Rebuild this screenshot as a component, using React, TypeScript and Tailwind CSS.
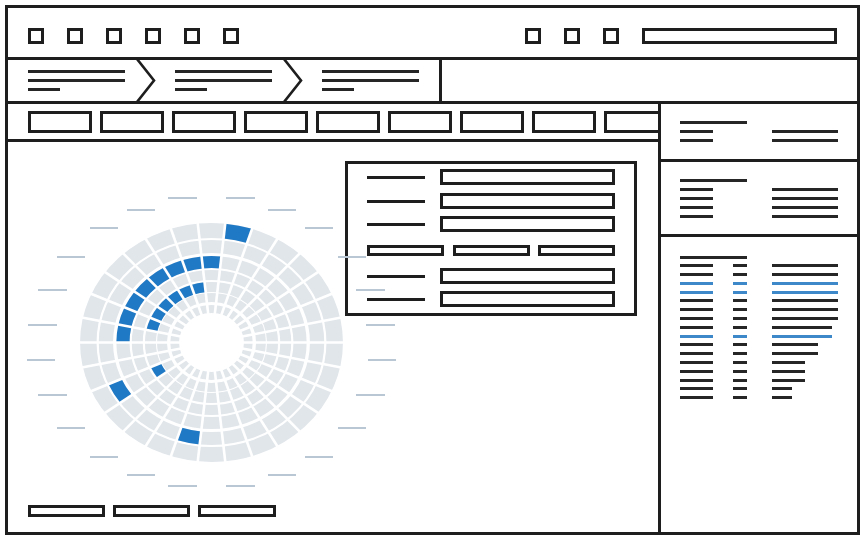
import React from "react";

// polar "heat" chart: 7 rings x 30 segments, drawn as stroked circles + white spokes
const RINGS: [number, number][] = [
  [104.5, 119.5],
  [89.5, 102.5],
  [74.5, 86.5],
  [62.5, 72.5],
  [50.5, 60.5],
  [40.5, 49.5],
  [29.5, 37.5],
];
const SEGS = 30;
const STEP = 360 / SEGS;

const BLUE: [number, number][] = [
  [0, 1],
  [2, 23], [2, 24], [2, 25], [2, 26], [2, 27], [2, 28], [2, 29], [2, 0],
  [4, 24], [4, 25], [4, 26], [4, 27], [4, 28], [4, 29],
  [4, 20],
  [1, 20],
  [1, 16],
];

const LEFT_DASHES: [number, number, number][] = [
  [168, 197, 198], [127, 155, 210], [90, 118, 228], [57, 85, 257],
  [38, 67, 290], [28, 57, 325], [27, 55, 360], [38, 67, 395],
  [57, 85, 428], [90, 118, 457], [127, 155, 475], [168, 197, 486],
];

const rad = (d: number) => (d * Math.PI) / 180;
const pt = (r: number, d: number) => [r * Math.sin(rad(d)), -r * Math.cos(rad(d))];

function arc(r: number, a0: number, a1: number) {
  const [x0, y0] = pt(r, a0);
  const [x1, y1] = pt(r, a1);
  return `M ${x0} ${y0} A ${r} ${r} 0 0 1 ${x1} ${y1}`;
}

function PolarChart() {
  return (
    <svg className="pointer-events-none absolute left-0 top-0 z-10 h-[390px] w-[650px] overflow-visible" viewBox="0 0 650 390">
      <g transform="translate(-8,-142)">
        {LEFT_DASHES.flatMap(([x1, x2, y], i) => [
          <line key={`l${i}`} x1={x1} x2={x2} y1={y} y2={y} stroke="#b9c7d4" strokeWidth={2} />,
          <line key={`r${i}`} x1={423 - x2} x2={423 - x1} y1={y} y2={y} stroke="#b9c7d4" strokeWidth={2} />,
        ])}
        <g transform="translate(211.5,342.5) scale(1.1,1)">
          {RINGS.map(([a, b], i) => (
            <circle key={i} r={(a + b) / 2} fill="none" stroke="#e1e6eb" strokeWidth={b - a} />
          ))}
          {BLUE.map(([ring, seg], i) => {
            const [a, b] = RINGS[ring];
            const c = seg * STEP;
            return (
              <path
                key={i}
                d={arc((a + b) / 2, c - STEP / 2, c + STEP / 2)}
                fill="none"
                stroke="#2079c4"
                strokeWidth={b - a}
              />
            );
          })}
          {Array.from({ length: SEGS }).map((_, k) => {
            const d = (k + 0.5) * STEP;
            const [x0, y0] = pt(26, d);
            const [x1, y1] = pt(123, d);
            return (
              <line
                key={k}
                x1={x0}
                y1={y0}
                x2={x1}
                y2={y1}
                stroke="#ffffff"
                strokeWidth={2.6}
                vectorEffect="non-scaling-stroke"
              />
            );
          })}
        </g>
      </g>
    </svg>
  );
}

function Sq() {
  return <div className="h-[16px] w-[16px] shrink-0 border-[3px] border-[#1e1e1e]" />;
}

function Line({ w, blue }: { w: number; blue?: boolean }) {
  return <div className={blue ? "h-[3px] bg-[#3d88c9]" : "h-[3px] bg-[#262626]"} style={{ width: w }} />;
}

function Crumb({ last }: { last?: boolean }) {
  return (
    <div className="flex h-full shrink-0 items-center pl-[20px]">
      <div className="flex w-[97px] flex-col gap-[6px]">
        <Line w={97} />
        <Line w={97} />
        <Line w={32} />
      </div>
      {!last && (
        <svg className="ml-[12px] h-[41px] w-[18px] overflow-visible" viewBox="0 0 18 41">
          <polyline points="0,-1 17,20.5 0,42" fill="none" stroke="#1e1e1e" strokeWidth={2.6} />
        </svg>
      )}
    </div>
  );
}

function FormRow({ mt }: { mt: string }) {
  return (
    <div className={`flex items-center pl-[19px] ${mt}`}>
      <div className="h-[3px] w-[58px] bg-[#1e1e1e]" />
      <div className="ml-[15px] h-[16px] w-[175px] border-[3px] border-[#1e1e1e]" />
    </div>
  );
}

const TABLE_ENDS = [66, 66, 66, 66, 66, 66, 66, 60, 60, 46, 46, 33, 33, 33, 20, 20];
const TABLE_BLUE = [2, 3, 8];

export default function App() {
  return (
    <div className="h-[540px] w-[864px] bg-white pl-[5px] pt-[5px]">
      <div className="flex h-[530px] w-[855px] flex-col border-[3px] border-[#1e1e1e]">
        {/* top bar */}
        <div className="flex h-[52px] shrink-0 items-center border-b-[3px] border-[#1e1e1e] px-[20px] pt-[7px]">
          <div className="flex gap-[23px]">
            {Array.from({ length: 6 }).map((_, i) => (
              <Sq key={i} />
            ))}
          </div>
          <div className="ml-auto flex items-center gap-[23px]">
            <Sq />
            <Sq />
            <Sq />
            <div className="h-[16px] w-[195px] border-[3px] border-[#1e1e1e]" />
          </div>
        </div>

        {/* breadcrumb */}
        <div className="flex h-[44px] shrink-0 border-b-[3px] border-[#1e1e1e]">
          <div className="flex w-[434px] shrink-0 overflow-hidden border-r-[3px] border-[#1e1e1e]">
            <Crumb />
            <Crumb />
            <Crumb last />
          </div>
          <div className="flex-1" />
        </div>

        {/* body */}
        <div className="flex min-h-0 flex-1">
          <div className="flex w-[650px] shrink-0 flex-col">
            <div className="flex h-[38px] shrink-0 items-center gap-[8px] overflow-hidden border-b-[3px] border-[#1e1e1e] pl-[20px]">
              {Array.from({ length: 9 }).map((_, i) => (
                <div key={i} className="h-[22px] w-[64px] shrink-0 border-[3px] border-[#1e1e1e]" />
              ))}
            </div>

            <div className="relative flex flex-1 flex-col">
              <PolarChart />
              <div className="ml-[337px] mt-[19px] flex h-[155px] w-[292px] flex-col border-[3px] border-[#1e1e1e]">
                <FormRow mt="mt-[5px]" />
                <FormRow mt="mt-[8px]" />
                <FormRow mt="mt-[7px]" />
                <div className="mt-[13px] flex gap-[8.5px] pl-[19px]">
                  <div className="h-[11px] w-[77px] border-[3px] border-[#1e1e1e]" />
                  <div className="h-[11px] w-[77px] border-[3px] border-[#1e1e1e]" />
                  <div className="h-[11px] w-[77px] border-[3px] border-[#1e1e1e]" />
                </div>
                <FormRow mt="mt-[12px]" />
                <FormRow mt="mt-[7px]" />
              </div>
              <div className="mt-auto flex gap-[8px] pb-[15px] pl-[20px]">
                <div className="h-[12px] w-[77px] border-[3px] border-[#1e1e1e]" />
                <div className="h-[12px] w-[77px] border-[3px] border-[#1e1e1e]" />
                <div className="h-[12px] w-[78px] border-[3px] border-[#1e1e1e]" />
              </div>
            </div>
          </div>

          {/* right panel */}
          <div className="flex w-[199px] shrink-0 flex-col border-l-[3px] border-[#1e1e1e]">
            <div className="flex h-[58px] shrink-0 items-center justify-between border-b-[3px] border-[#1e1e1e] px-[19px]">
              <div className="flex flex-col gap-[6px]">
                <Line w={67} />
                <Line w={33} />
                <Line w={33} />
              </div>
              <div className="flex flex-col gap-[6px]">
                <div className="h-[3px] w-[66px]" />
                <Line w={66} />
                <Line w={66} />
              </div>
            </div>
            <div className="flex h-[75px] shrink-0 items-center justify-between border-b-[3px] border-[#1e1e1e] px-[19px]">
              <div className="flex flex-col gap-[6px]">
                <Line w={67} />
                <Line w={33} />
                <Line w={33} />
                <Line w={33} />
                <Line w={33} />
              </div>
              <div className="flex flex-col gap-[6px]">
                <div className="h-[3px] w-[66px]" />
                <Line w={66} />
                <Line w={66} />
                <Line w={66} />
                <Line w={66} />
              </div>
            </div>
            <div className="flex flex-col gap-[5.8px] pl-[19px] pt-[18.5px]">
              <Line w={67} />
              {TABLE_ENDS.map((w, i) => {
                const blue = TABLE_BLUE.includes(i);
                return (
                  <div key={i} className="flex">
                    <Line w={33} blue={blue} />
                    <div className="ml-[20px]">
                      <Line w={14} blue={blue} />
                    </div>
                    <div className="ml-[25px]">
                      <Line w={w} blue={blue} />
                    </div>
                  </div>
                );
              })}
            </div>
          </div>
        </div>
      </div>
    </div>
  );
}
